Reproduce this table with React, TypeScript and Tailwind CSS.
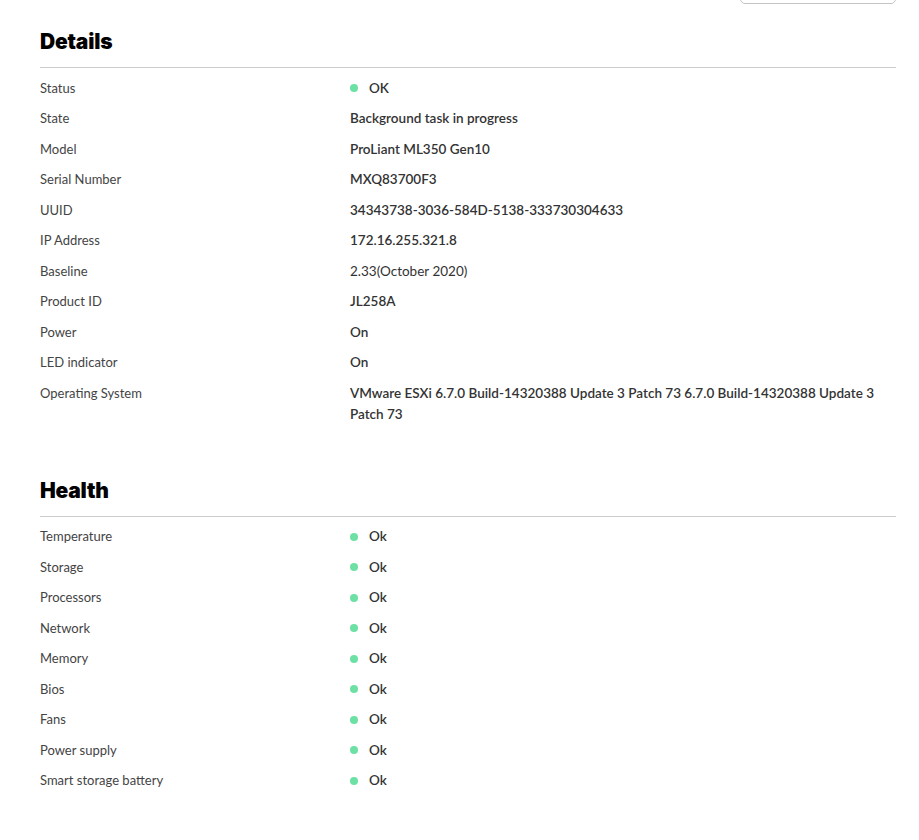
import React from 'react';

interface Row {
  label: string;
  value: string;
  status?: boolean;
  plain?: boolean;
}

const details: Row[] = [
  { label: 'Status', value: 'OK', status: true },
  { label: 'State', value: 'Background task in progress' },
  { label: 'Model', value: 'ProLiant ML350 Gen10' },
  { label: 'Serial Number', value: 'MXQ83700F3' },
  { label: 'UUID', value: '34343738-3036-584D-5138-333730304633' },
  { label: 'IP Address', value: '172.16.255.321.8' },
  { label: 'Baseline', value: '2.33(October 2020)', plain: true },
  { label: 'Product ID', value: 'JL258A' },
  { label: 'Power', value: 'On' },
  { label: 'LED indicator', value: 'On' },
  {
    label: 'Operating System',
    value: 'VMware ESXi 6.7.0 Build-14320388 Update 3 Patch 73 6.7.0 Build-14320388 Update 3 Patch 73'
  }
];

const health: Row[] = [
  'Temperature',
  'Storage',
  'Processors',
  'Network',
  'Memory',
  'Bios',
  'Fans',
  'Power supply',
  'Smart storage battery'
].map((label) => ({ label, value: 'Ok', status: true }));

const Section: React.FC<{ title: string; rows: Row[] }> = ({ title, rows }) => (
  <section>
    <h2 className="text-[21px] font-black leading-[28px] tracking-[-0.2px] text-black pb-[11px] border-b border-[#cccccc] font-['Inter',sans-serif]">
      {title}
    </h2>
    <div className="pt-[5px]">
      {rows.map((row) => (
        <div key={row.label} className="flex py-[4.75px] leading-[21px]">
          <div className="w-[310px] shrink-0 text-[13px] text-[#444444]">{row.label}</div>
          <div
            className={
              row.plain
                ? 'flex-1 pr-[18px] text-[13.5px] text-[#333333]'
                : 'flex-1 pr-[18px] text-[13.5px] text-[#333333] font-semibold'
            }
          >
            {row.status ? (
              <span className="flex items-center">
                <span className="w-[8px] h-[8px] rounded-full bg-[#6de0a3] mr-[11px]" />
                {row.value}
              </span>
            ) : (
              row.value
            )}
          </div>
        </div>
      ))}
    </div>
  </section>
);

export default function App() {
  return (
    <div className="min-h-[840px] bg-white pl-[40px] pr-[23px] font-['Lato',sans-serif]">
      <div className="flex justify-end">
        <div className="w-[156px] h-[30px] -mt-[26px] border border-[#c4c4c4] rounded-[5px]" />
      </div>
      <div className="pt-[24px]">
        <Section title="Details" rows={details} />
      </div>
      <div className="pt-[47px]">
        <Section title="Health" rows={health} />
      </div>
    </div>
  );
}
